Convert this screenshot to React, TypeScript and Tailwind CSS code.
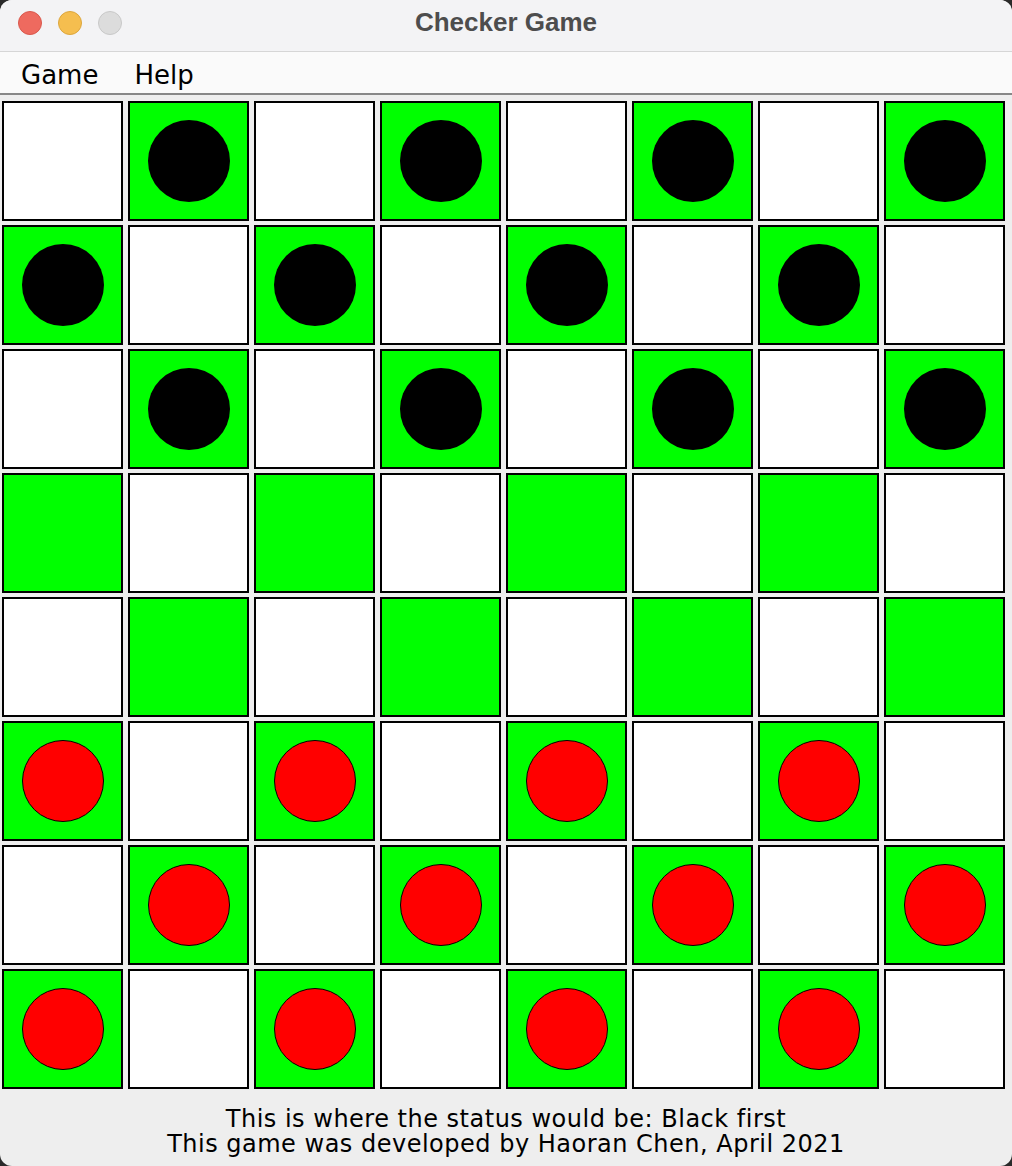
import React from "react";

export default function App() {
  const rows = Array.from({ length: 8 }, (_, r) => r);
  const cols = Array.from({ length: 8 }, (_, c) => c);
  return (
    <div className="w-[1012px] h-[1166px] bg-[#2a2a2a] overflow-hidden">
      <div className="w-[1012px] h-[1166px] rounded-[12px] overflow-hidden bg-[#eeeeee] flex flex-col">
        {/* Title bar */}
        <div className="relative h-[52px] bg-[#f3f3f5] border-b border-[#d6d6d6] flex items-center justify-center shrink-0 pb-[7px]">
          <div className="absolute left-[18px] top-[11px] flex gap-[16px]">
            <div className="w-[24px] h-[24px] rounded-full bg-[#ee6a5f] border border-[#d9584d]" />
            <div className="w-[24px] h-[24px] rounded-full bg-[#f5be4f] border border-[#dca63d]" />
            <div className="w-[24px] h-[24px] rounded-full bg-[#dcdcdc] border border-[#c8c8c8]" />
          </div>
          <span className="text-[26px] font-bold text-[#4d4d4d] font-['Liberation_Sans',Arial,sans-serif] leading-none">
            Checker Game
          </span>
        </div>
        {/* Menu bar */}
        <div className="h-[43px] bg-[#fafafa] border-b-2 border-[#878787] flex items-center shrink-0 pt-[4px] font-['DejaVu_Sans',sans-serif] text-[26px] leading-none text-black">
          <span className="ml-[21px]">Game</span>
          <span className="ml-[36px]">Help</span>
        </div>
        {/* Board */}
        <div className="pt-[6px] pl-[2px]">
          <div className="grid grid-cols-[repeat(8,121px)] auto-rows-[120px] gap-x-[5px] gap-y-[4px]">
            {rows.map((r) =>
              cols.map((c) => {
                const green = (r + c) % 2 === 1;
                const piece = green && r <= 2 ? "black" : green && r >= 5 ? "red" : null;
                return (
                  <div
                    key={`${r}-${c}`}
                    className={`border-2 border-black flex items-center justify-center ${green ? "bg-[#00ff00]" : "bg-white"}`}
                  >
                    {piece === "black" && <div className="w-[82px] h-[82px] rounded-full bg-black" />}
                    {piece === "red" && (
                      <div className="w-[82px] h-[82px] rounded-full bg-[#ff0000] border-[1.5px] border-black" />
                    )}
                  </div>
                );
              })
            )}
          </div>
        </div>
        {/* Status */}
        <div className="flex flex-col items-center pt-[18px] font-['DejaVu_Sans',sans-serif] text-[24px] leading-[25px] tracking-[0.5px] text-black">
          <span>This is where the status would be: Black first</span>
          <span>This game was developed by Haoran Chen, April 2021</span>
        </div>
      </div>
    </div>
  );
}
